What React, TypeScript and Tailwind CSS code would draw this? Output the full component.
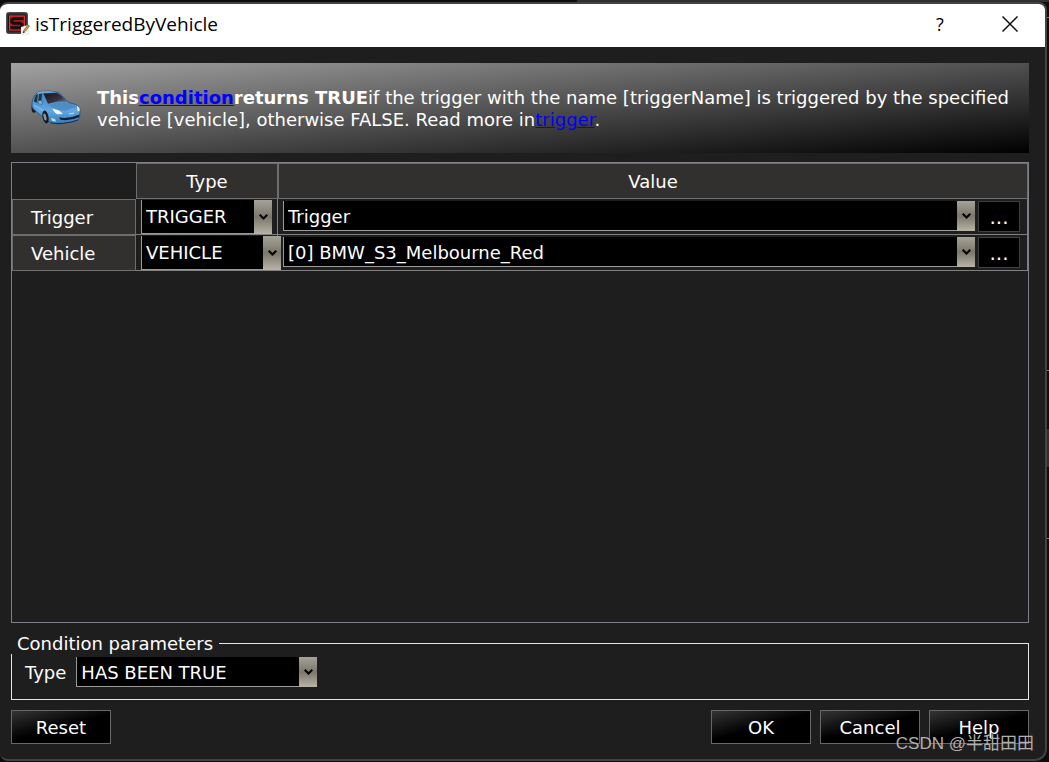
import { ReactNode, useState } from "react";
import clsx from "clsx";

type ComboProps = {
  id: string;
  label?: string;
  options: string[];
  className?: string;
};

const Combo = ({ id, label, options, className }: ComboProps) => {
  const [value, setValue] = useState(options[0]);

  return (
    <div className={clsx("relative flex", className)}>
      <select
        id={id}
        aria-label={label}
        value={value}
        onChange={(e) => setValue(e.target.value)}
        className="w-full appearance-none border-b border-l border-[#9a9a96] bg-black pl-1 pr-5 pt-0.5 text-white outline-none"
      >
        {options.map((option) => (
          <option key={option}>{option}</option>
        ))}
      </select>
      <span className="pointer-events-none absolute inset-y-0 right-0 flex w-[18px] items-center justify-center bg-linear-to-b from-[#a5a297] via-[#7b776b] to-[#b8b4a8]">
        <svg width="9" height="6" viewBox="0 0 9 6" fill="none">
          <path d="M0.7 0.8 4.5 4.5 8.3 0.8" stroke="#000" strokeWidth="2" />
        </svg>
      </span>
    </div>
  );
};

const DialogButton = ({ children }: { children: ReactNode }) => (
  <button
    type="button"
    className="h-[34px] w-[100px] border border-[#686868] bg-linear-165/srgb from-[#343434] to-black to-50% pt-0.5"
  >
    {children}
  </button>
);

const AppIcon = () => (
  <svg width="24" height="24" viewBox="0 0 24 24" fill="none">
    <rect x="0.5" y="0.5" width="21" height="21" rx="2" fill="#303638" stroke="#4a4f52" />
    <rect x="2.500" y="3" width="17" height="16" rx="1" fill="#a8191d" stroke="#1a1214" />
    <rect x="3.500" y="4" width="15" height="14" stroke="#e8383b" strokeWidth="0.8" />
    <path
      d="M17.500 6.500H8L5.800 8v2l1.700 1.200h6.500l2 1.300v2L14 15.700H4.500"
      stroke="#170d0f"
      strokeWidth="3"
    />
    <path d="m15 15 7-2 1 1v8l-1 1h-7z" fill="#f2f0e8" />
    <path d="m17 21 1-3 4-5 1.500 1-4 5z" fill="#d3a747" stroke="#5d4a24" strokeWidth="0.6" />
    <path d="m17 21 .6-1.800 1.200 1z" fill="#222" />
  </svg>
);

const CarIcon = () => (
  <svg width="50" height="36" viewBox="0 0 50 36" fill="none" className="shrink-0">
    <defs>
      <linearGradient id="carBody" x1="0" y1="0" x2="0" y2="1">
        <stop offset="0" stopColor="#3f7fb9" />
        <stop offset="0.6" stopColor="#62a8e2" />
        <stop offset="1" stopColor="#3479b6" />
      </linearGradient>
      <linearGradient id="carGlass" x1="0" y1="0" x2="1" y2="1">
        <stop offset="0" stopColor="#17151c" />
        <stop offset="0.6" stopColor="#37323f" />
        <stop offset="1" stopColor="#8d8995" />
      </linearGradient>
    </defs>
    <ellipse cx="3" cy="18" rx="2.500" ry="4.800" fill="#17191c" />
    <path
      d="M.8 15 1.500 9.500 4.500 4.500Q6 1.800 10 1.500L18 1l8 1.200q3 1 5.500 3.800l6 6.500 7.500 2q4 2 4 5l-.3 8q-1.200 3-5.200 4l-14 2.500q-8 .4-12-2.500L11 26.500 3.500 20Q.8 18.500.8 15z"
      fill="url(#carBody)"
      stroke="#254f78"
      strokeWidth="0.8"
    />
    <path d="M5.500 3.500Q7 1.600 10 1.500L18 1l8 1.200-12 .6-5 .7z" fill="#73b1e5" />
    <path d="m12.500 3.500 13-.6q3.500 1 5.500 3.600l5.500 5.500-9-.5-10.500 2.300z" fill="url(#carGlass)" />
    <path d="M3 10.500 5 5l6-1.500L10.500 9l1 4.500-8-1.500z" fill="#25303b" />
    <path d="M7.500 4.500 6.500 12" stroke="#5a9cd6" strokeWidth="1" />
    <path d="m7 11 3-.7 1.500 2-.5 2.200-3.500-.7z" fill="#76b2e3" stroke="#295a87" strokeWidth="0.5" />
    <path d="M3 15.500q5 2 9 5" stroke="#9dccf0" strokeWidth="0.8" />
    <path d="m17 15 10-2.500 10 .5 9 3.500-12 4.500-8-1z" fill="#4c85bd" opacity="0.7" />
    <ellipse cx="14.500" cy="27" rx="3" ry="6.500" transform="rotate(-12 14.500 27)" fill="#15181b" />
    <ellipse cx="14" cy="27" rx="1.400" ry="3.600" transform="rotate(-12 14 27)" fill="#8a949d" />
    <path d="m21.500 18.500 6.500 2 4 3.500-5.500.2q-3-1-5-5.700z" fill="#edf6fc" />
    <path d="m46 15.500 2.500 2.500v3.500l-2-1z" fill="#edf6fc" />
    <path d="M28 27.500q10 1.800 20.500-3l-.5 2.800q-9 4-18.500 2.500z" fill="#112033" />
    <path d="m38 24 5-.9" stroke="#b9ddf5" strokeWidth="1.200" />
    <path d="m20 28 4 1 1 2.500-4-.5z" fill="#b9def5" />
    <path d="M20 33q12 2 27-3" stroke="#1b334a" strokeWidth="1" />
  </svg>
);

const rows = [
  {
    name: "Trigger",
    types: ["TRIGGER", "VEHICLE"],
    values: ["Trigger"],
    typeWidth: "w-[131px]",
  },
  {
    name: "Vehicle",
    types: ["VEHICLE", "TRIGGER"],
    values: ["[0] BMW_S3_Melbourne_Red"],
    typeWidth: "w-[140px]",
  },
];

const headerCell = "border border-[#6e6e6e] bg-[#32302f] p-0 pt-0.5 font-normal";

export default function App() {
  return (
    <div className="relative flex min-h-screen flex-col bg-[#0d0d0d] pr-[2px] pb-px pt-[2px] font-['DejaVu_Sans',Verdana,sans-serif] text-lg leading-[22px] text-white">
      <div className="absolute right-0 top-0 h-[2px] w-[45%] bg-[#303030]" />
      <div className="absolute right-0 top-[17px] h-px w-[2px] bg-[#777]" />
      <div className="absolute right-0 top-[370px] h-px w-[2px] bg-[#777]" />
      <div className="absolute right-0 top-[429px] h-[38px] w-[2px] bg-[#303030]" />
      <div className="absolute right-0 top-[538px] h-px w-[2px] bg-[#777]" />

      <div
        role="dialog"
        aria-labelledby="title"
        className="relative flex flex-1 flex-col overflow-hidden rounded-lg rounded-br-xl border-y-2 border-r-2 border-[#434343] bg-[#1e1e1e]"
      >
        <header className="flex h-[43px] items-center bg-white pb-1 pl-1.5 text-black">
          <AppIcon />
          <h1 id="title" className="ml-[5px] flex-1 font-['Open_Sans',sans-serif] text-[19px]">
            isTriggeredByVehicle
          </h1>
          <button type="button" className="h-full w-[70px] font-['Open_Sans',sans-serif]">
            ?
          </button>
          <button type="button" aria-label="Close" className="flex h-full w-[70px] items-center justify-center">
            <svg width="16" height="16" viewBox="0 0 16 16" fill="none">
              <path d="m0.500 0.500 15 15M15.500 0.500l-15 15" stroke="#111" strokeWidth="1.500" />
            </svg>
          </button>
        </header>

        <main className="flex flex-1 flex-col pb-[15px] pl-[11px] pr-4 pt-4">
          <section className="flex h-[90px] items-center gap-4 bg-linear-to-br/srgb from-[#a2a2a2] to-black pl-5 pr-4">
            <CarIcon />
            <p className="pt-0.5">
              <b>
                This
                <a href="#condition" className="text-[#0000ff] underline">
                  condition
                </a>
                returns TRUE
              </b>
              if the trigger with the name [triggerName] is triggered by the
              specified vehicle [vehicle], otherwise FALSE. Read more in
              <a href="#trigger" className="text-[#0000ff] underline">
                trigger
              </a>
              .
            </p>
          </section>

          <div className="mt-[9px] flex-1 border border-[#80808a]">
            <table className="w-full table-fixed border-separate border-spacing-0">
              <colgroup>
                <col className="w-[124px]" />
                <col className="w-[142px]" />
                <col />
              </colgroup>
              <thead>
                <tr className="h-9">
                  <td />
                  <th scope="col" className={headerCell}>
                    Type
                  </th>
                  <th scope="col" className={headerCell}>
                    Value
                  </th>
                </tr>
              </thead>
              <tbody>
                {rows.map((row) => (
                  <tr key={row.name} className="h-9">
                    <th scope="row" className={clsx(headerCell, "pl-[18px] text-left")}>
                      {row.name}
                    </th>
                    <td className="relative z-10 border-b border-r border-[#808080] p-0 pl-[5px]">
                      <Combo
                        id={`${row.name}-type`}
                        label={`${row.name} type`}
                        options={row.types}
                        className={clsx("h-[34px]", row.typeWidth)}
                      />
                    </td>
                    <td className="border-b border-r border-[#808080] p-0 pl-[5px] pr-[7px]">
                      <div className="flex gap-[3px]">
                        <Combo
                          id={`${row.name}-value`}
                          label={`${row.name} value`}
                          options={row.values}
                          className="h-[30px] flex-1"
                        />
                        <button
                          type="button"
                          aria-label={`Browse ${row.name}`}
                          className="h-[31px] w-[42px] border border-[#404040] bg-black text-xl"
                        >
                          ...
                        </button>
                      </div>
                    </td>
                  </tr>
                ))}
              </tbody>
            </table>
          </div>

          <fieldset className="mt-[9px] border border-[#e4e4e4] pb-3 pl-[13px]">
            <legend className="-ml-[14px] bg-[#1e1e1e] px-1.5 pt-0.5 leading-5">
              Condition parameters
            </legend>
            <div className="mt-[3px] flex items-center gap-2.5">
              <label htmlFor="condition-type" className="pt-0.5">
                Type
              </label>
              <Combo
                id="condition-type"
                options={["HAS BEEN TRUE", "IS TRUE"]}
                className="h-[30px] w-[241px]"
              />
            </div>
          </fieldset>

          <footer className="mt-[10px] flex gap-[9px]">
            <DialogButton>Reset</DialogButton>
            <div className="flex-1" />
            <DialogButton>OK</DialogButton>
            <DialogButton>Cancel</DialogButton>
            <DialogButton>Help</DialogButton>
          </footer>
        </main>
      </div>

      <span className="pointer-events-none absolute bottom-[7px] right-[15px] font-['Liberation_Sans','Noto_Sans_CJK_SC',sans-serif] text-[17px] text-[#b0b0b0]">
        CSDN @半甜田田
      </span>
    </div>
  );
}
